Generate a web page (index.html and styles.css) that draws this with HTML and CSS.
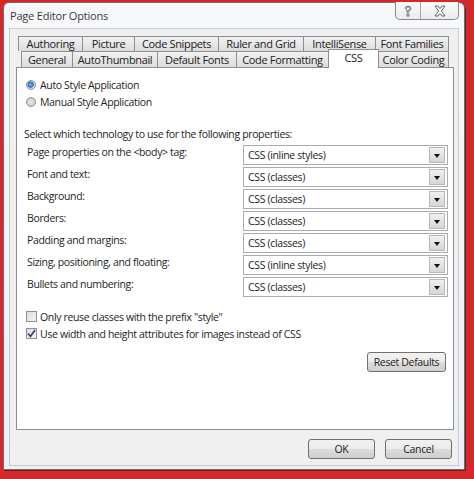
FILE: index.html
```html
<!DOCTYPE html>
<html>
<head>
<meta charset="utf-8">
<link rel="stylesheet" href="styles.css">
</head>
<body>
<div class="window">
  <div class="titlebar">
    <span class="title">Page Editor Options</span>
    <div class="capbtns">
      <div class="capbtn help"><svg width="12" height="13" viewBox="0 0 12 13"><path d="M3 4.5 C3 1.5 9 1.5 9 4.5 C9 6.5 6.5 6.5 6.5 8.5 M5.5 8.5 C5.5 6 8 6 8 4.5 C8 2.5 4 2.5 4 4.5 Z" fill="none" stroke="#6b6b6b" stroke-width="1"/><rect x="5" y="10" width="2" height="2" fill="none" stroke="#6b6b6b" stroke-width="0.9"/></svg></div>
      <div class="capbtn close"><svg width="14" height="12" viewBox="0 0 14 12"><path d="M2 1 L5 1 L7 3.5 L9 1 L12 1 L8.5 6 L12 11 L9 11 L7 8.5 L5 11 L2 11 L5.5 6 Z" fill="#f4f4f4" stroke="#6b6b6b" stroke-width="1"/></svg></div>
    </div>
  </div>
  <div class="client">
    <div class="tabs">
      <div class="tabrow top">
        <div class="tab w-auth">Authoring</div>
        <div class="tab w-pic">Picture</div>
        <div class="tab w-snip">Code Snippets</div>
        <div class="tab w-ruler">Ruler and Grid</div>
        <div class="tab w-intel">IntelliSense</div>
        <div class="tab w-ff">Font Families</div>
      </div>
      <div class="tabrow bottom">
        <div class="tab w-gen">General</div>
        <div class="tab w-thumb">AutoThumbnail</div>
        <div class="tab w-df">Default Fonts</div>
        <div class="tab w-cf">Code Formatting</div>
        <div class="tab sel w-css">CSS</div>
        <div class="tab w-cc">Color Coding</div>
      </div>
    </div>
    <div class="panel">
      <div class="opt"><span class="radio on"></span>Auto Style Application</div>
      <div class="opt"><span class="radio"></span>Manual Style Application</div>
      <div class="intro">Select which technology to use for the following properties:</div>
      <div class="rows">
        <div class="row"><span class="lbl">Page properties on the &lt;body&gt; tag:</span><div class="combo"><span>CSS (inline styles)</span><i class="arrow"></i></div></div>
        <div class="row"><span class="lbl">Font and text:</span><div class="combo"><span>CSS (classes)</span><i class="arrow"></i></div></div>
        <div class="row"><span class="lbl">Background:</span><div class="combo"><span>CSS (classes)</span><i class="arrow"></i></div></div>
        <div class="row"><span class="lbl">Borders:</span><div class="combo"><span>CSS (classes)</span><i class="arrow"></i></div></div>
        <div class="row"><span class="lbl">Padding and margins:</span><div class="combo"><span>CSS (classes)</span><i class="arrow"></i></div></div>
        <div class="row"><span class="lbl">Sizing, positioning, and floating:</span><div class="combo"><span>CSS (inline styles)</span><i class="arrow"></i></div></div>
        <div class="row"><span class="lbl">Bullets and numbering:</span><div class="combo"><span>CSS (classes)</span><i class="arrow"></i></div></div>
      </div>
      <div class="checks">
        <div class="opt"><span class="check"></span>Only reuse classes with the prefix "style"</div>
        <div class="opt"><span class="check on"><svg width="9" height="9" viewBox="0 0 9 9"><path d="M1 4.5 L3.5 7.5 L8 1" fill="none" stroke="#2a3f73" stroke-width="1.6"/></svg></span>Use width and height attributes for images instead of CSS</div>
      </div>
      <div class="resetline"><div class="btn reset">Reset Defaults</div></div>
    </div>
    <div class="footer">
      <div class="btn ok">OK</div>
      <div class="btn cancel">Cancel</div>
    </div>
  </div>
</div>
</body>
</html>
```

FILE: styles.css
```css
html, body {
  margin: 0;
  padding: 0;
}
body {
  background: #d3282c;
  width: 474px;
  height: 479px;
  overflow: hidden;
  font-family: "Open Sans", "Noto Sans", sans-serif;
  font-size: 10.5px;
  letter-spacing: -0.35px;
  color: #1e1e1e;
}
.window {
  position: relative;
  margin: 2px 0 0 3px;
  width: 460px;
  height: 466px;
  border: 1px solid #6d6d6d;
  border-radius: 6px 6px 1px 1px;
  background: linear-gradient(#f7f8fa, #eef1f4);
  box-shadow: 1px 1px 0 #7a1a1c;
}
.titlebar {
  height: 25px;
  display: flex;
  align-items: flex-start;
  padding-left: 6px;
}
.title {
  font-size: 11px;
  letter-spacing: -0.2px;
  color: #3a3a3a;
  margin-top: 5px;
}
.capbtns {
  position: absolute;
  right: 5px;
  top: -1px;
  display: flex;
  border: 1px solid #8a8a8a;
  border-top: none;
  border-radius: 0 0 5px 5px;
  background: linear-gradient(#fbfbfb, #e9ebee);
  overflow: hidden;
}
.capbtn {
  height: 17px;
  display: flex;
  align-items: center;
  justify-content: center;
}
.capbtn.help {
  width: 24px;
  border-right: 1px solid #a8a8a8;
}
.capbtn.close {
  width: 37px;
}
.client {
  margin: 0 5px 0 5px;
  height: 436px;
  border: 1px solid #c8cbd0;
  background: #f0f0f0;
  padding: 0 6px 0 6px;
}
.tabs {
  padding-top: 7px;
}
.tabrow {
  display: flex;
}
.tabrow.top {
  padding-left: 2px;
  height: 15px;
}
.tabrow.bottom {
  padding-left: 5px;
  height: 16px;
  position: relative;
  z-index: 2;
}
.tab {
  box-sizing: border-box;
  border: 1px solid #8c8e94;
  border-bottom: none;
  margin-right: -1px;
  background: linear-gradient(#f2f2f2, #dcdcdc);
  font-size: 11px;
  letter-spacing: -0.35px;
  line-height: 14px;
  text-align: center;
  color: #222;
  white-space: nowrap;
}
.tabrow.bottom .tab {
  line-height: 15px;
}
.tab.sel {
  background: #fff;
  margin-top: -2px;
  height: 19px;
  line-height: 15px;
  border-color: #8c8e94;
}
.w-auth { width: 65px; }
.w-pic { width: 53px; }
.w-snip { width: 85px; }
.w-ruler { width: 86px; }
.w-intel { width: 73px; }
.w-ff { width: 74px; }
.w-gen { width: 52px; }
.w-thumb { width: 86px; }
.w-df { width: 80px; }
.w-cf { width: 93px; }
.w-css { width: 51px; }
.w-cc { width: 71px; }
.panel {
  box-sizing: border-box;
  height: 363px;
  width: 438px;
  background: #fff;
  border: 1px solid #8c8e94;
  padding: 8px 0 0 8px;
}
.opt {
  display: flex;
  align-items: center;
  height: 17px;
  white-space: nowrap;
}
.radio {
  box-sizing: border-box;
  width: 10px;
  height: 10px;
  border-radius: 50%;
  border: 1px solid #8e8f8f;
  background: radial-gradient(circle, #e6e6e6 0, #c9c9c9 100%);
  margin-right: 4px;
  margin-left: 1px;
  position: relative;
}
.radio.on {
  background: radial-gradient(circle at 45% 45%, #7fb6e6 0, #2a6fb5 45%, #c7d6e6 55%, #e4e4e4 100%);
}
.intro {
  margin-top: 16px;
  height: 17px;
  line-height: 17px;
  margin-left: -1px;
}
.rows {
  margin-top: 2px;
}
.row {
  display: flex;
  align-items: flex-start;
  height: 22px;
  padding-left: 2px;
}
.lbl {
  width: 216px;
  line-height: 14px;
}
.combo {
  box-sizing: border-box;
  width: 205px;
  height: 20px;
  border: 1px solid #a9abb1;
  display: flex;
  align-items: center;
  justify-content: space-between;
  padding-left: 4px;
  padding-right: 2px;
  background: #fff;
}
.arrow {
  box-sizing: border-box;
  width: 16px;
  height: 16px;
  border: 1px solid #b8b8b8;
  background: linear-gradient(#f0f0f0, #d6d6d6);
  position: relative;
}
.arrow::after {
  content: "";
  position: absolute;
  left: 4px;
  top: 6px;
  border-left: 3px solid transparent;
  border-right: 3px solid transparent;
  border-top: 4px solid #111;
}
.checks {
  margin-top: 9px;
}
.check {
  box-sizing: border-box;
  width: 11px;
  height: 11px;
  border: 1px solid #8e8f8f;
  background: linear-gradient(135deg, #dcdcdc, #f6f6f6);
  margin-right: 3px;
  margin-left: 1px;
  display: flex;
  align-items: center;
  justify-content: center;
}
.resetline {
  display: flex;
  justify-content: flex-end;
  padding-right: 7px;
  margin-top: 10px;
}
.btn {
  box-sizing: border-box;
  height: 20px;
  border: 1px solid #707070;
  border-radius: 3px;
  background: linear-gradient(#f2f2f2 0, #ebebeb 50%, #dddddd 51%, #cfcfcf 100%);
  display: flex;
  align-items: center;
  justify-content: center;
}
.reset { width: 79px; }
.footer {
  display: flex;
  justify-content: flex-end;
  gap: 10px;
  margin-top: 9px;
}
.ok, .cancel { width: 67px; }
```
